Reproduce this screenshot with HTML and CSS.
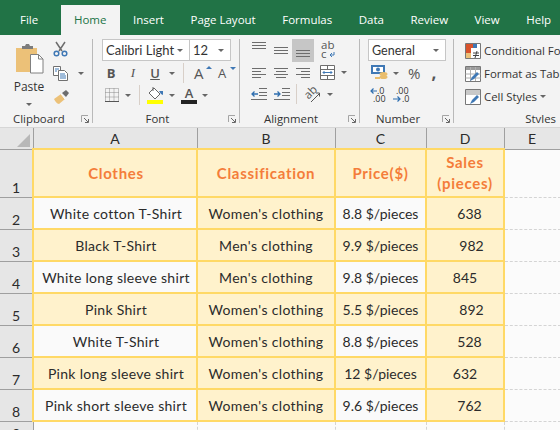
FILE: index.html
```html
<!DOCTYPE html>
<html lang="en">
<head>
  <meta charset="UTF-8" />
  <title>Clothes - Excel</title>
  <link rel="stylesheet" href="styles.css">
</head>
<body>

  <!-- tabs -->
  <div class="tabs">
    <div class="tab tab-file">File</div>
    <div class="tab active">Home</div>
    <div class="tab">Insert</div>
    <div class="tab">Page Layout</div>
    <div class="tab">Formulas</div>
    <div class="tab">Data</div>
    <div class="tab">Review</div>
    <div class="tab">View</div>
    <div class="tab">Help</div>
  </div>

  <!-- ribbon -->
  <div class="ribbon">

    <div class="group group-clipboard">
      <div class="group-body clip-body">
        <div class="paste">
          <svg class="fix" width="29" height="31" viewBox="0 0 29 31">
            <path d="M1 5h21v24H1z" fill="#ecc178"/>
            <path d="M7 6V3h3l1-2h3l1 2h3v3z" fill="#7c7c7c"/>
            <path d="M15.500 11.500h8l4.500 4.500v14h-12.500z" fill="#fff" stroke="#808080"/>
            <path d="M23.500 11.500v4.500h4.500" fill="none" stroke="#808080"/>
          </svg>
          <span class="paste-label">Paste</span>
          <span class="caret"></span>
        </div>
        <div class="clip-tools">
          <div class="tool-row">
            <svg class="fix" width="15" height="16" viewBox="0 0 15 16">
              <path d="M3 1l6 9M12 1l-6 9" stroke="#6d6d6d" stroke-width="1.500" fill="none"/>
              <circle cx="3.500" cy="12.500" r="2.300" fill="none" stroke="#3f78b5" stroke-width="1.500"/>
              <circle cx="11.500" cy="12.500" r="2.300" fill="none" stroke="#3f78b5" stroke-width="1.500"/>
            </svg>
          </div>
          <div class="tool-row">
            <svg class="fix" width="16" height="15" viewBox="0 0 16 15">
              <path d="M.5.500h7v9h-7z" fill="#fff" stroke="#707070"/>
              <path d="M5.500 4.500h6l3 3v7h-9z" fill="#fff" stroke="#707070"/>
              <path d="M2 3h4M2 5h2M7 8h5M7 10h6M7 12h6" stroke="#3f78b5"/>
            </svg>
            <span class="caret"></span>
          </div>
          <div class="tool-row">
            <svg class="fix" width="16" height="15" viewBox="0 0 16 15">
              <path d="M1 9l7-5 4 5-6 5c-2 0-4-3-5-5z" fill="#ecc178"/>
              <path d="M9 3l4-3 3 3-3 4z" fill="#6d6d6d"/>
              <path d="M8 4l4 5" stroke="#fff"/>
            </svg>
          </div>
        </div>
      </div>
      <div class="group-label">Clipboard<svg class="launcher" width="8" height="8" viewBox="0 0 8 8"><path d="M.5 7V.5H7" fill="none" stroke="#a5a5a5"/><path d="M3 3l4 4M7.500 4v3.500H4" fill="none" stroke="#666"/></svg></div>
    </div>

    <div class="group group-font">
      <div class="group-body">
        <div class="combo-row">
          <div class="combo combo-name">Calibri Light<span class="caret"></span></div>
          <div class="combo combo-size">12<span class="caret"></span></div>
        </div>
        <div class="tool-line font-line">
          <span class="glyph glyph-b">B</span>
          <span class="glyph glyph-i">I</span>
          <span class="glyph glyph-u">U</span>
          <span class="caret"></span>
          <span class="sep"></span>
          <span class="grow-a">A<i class="tip tip-up"></i></span>
          <span class="grow-a shrink-a">A<i class="tip tip-down"></i></span>
        </div>
        <div class="tool-line font-line-2">
          <svg class="fix" width="14" height="14" viewBox="0 0 14 14">
            <path d="M.5.500h13v13H.5zM.5 4.500h13M.5 9h13M4.500.500v13M9 .500v13" fill="none" stroke="#8a8a8a" stroke-dasharray="1 1"/>
            <path d="M0 13.500h14" stroke="#555"/>
          </svg>
          <span class="caret"></span>
          <span class="sep"></span>
          <svg class="fix" width="16" height="17" viewBox="0 0 16 17">
            <path d="M7 1l6 6-5 5-6-6z" fill="#fff" stroke="#666"/>
            <path d="M6 0v4" stroke="#666"/>
            <path d="M12 4h4v4l-2-1z" fill="#3f78b5"/>
            <path d="M0 13h16v4H0z" fill="#ffff00"/>
          </svg>
          <span class="caret"></span>
          <span class="color-a">A</span>
          <span class="caret"></span>
        </div>
      </div>
      <div class="group-label">Font<svg class="launcher" width="8" height="8" viewBox="0 0 8 8"><path d="M.5 7V.5H7" fill="none" stroke="#a5a5a5"/><path d="M3 3l4 4M7.500 4v3.500H4" fill="none" stroke="#666"/></svg></div>
    </div>

    <div class="group group-align">
      <div class="group-body align-grid">
        <svg class="fix ico-top" width="14" height="9" viewBox="0 0 14 9"><path d="M0 .500h14M0 3.500h14M0 6.500h14" stroke="#6d6d6d"/></svg>
        <svg class="fix ico-mid" width="14" height="9" viewBox="0 0 14 9"><path d="M0 .500h14M0 3.500h14M0 6.500h14" stroke="#6d6d6d"/></svg>
        <div class="align-on"><svg class="fix" width="14" height="9" viewBox="0 0 14 9"><path d="M0 .500h14M0 3.500h14M0 6.500h14" stroke="#6d6d6d"/></svg></div>
        <svg class="fix ico-wrap" width="16" height="20" viewBox="0 0 16 20">
          <text x="0" y="9" class="svg-txt">ab</text>
          <text x="0" y="18" class="svg-txt">c</text>
          <path d="M13 12v3H9M11 13l-2 2 2 2" fill="none" stroke="#3f78b5"/>
        </svg>

        <svg class="fix" width="14" height="10" viewBox="0 0 14 10"><path d="M0 .500h14M0 3.500h9M0 6.500h14M0 9.500h9" stroke="#6d6d6d"/></svg>
        <svg class="fix" width="14" height="10" viewBox="0 0 14 10"><path d="M0 .500h14M2 3.500h10M0 6.500h14M2 9.500h10" stroke="#6d6d6d"/></svg>
        <svg class="fix" width="14" height="10" viewBox="0 0 14 10"><path d="M0 .500h14M5 3.500h9M0 6.500h14M5 9.500h9" stroke="#6d6d6d"/></svg>
        <div class="merge">
          <svg class="fix" width="15" height="15" viewBox="0 0 15 15">
            <path d="M.5.500h14v14H.5zM.5 4.500h14M.5 10.500h14M7.500.500v4M7.500 10.500v4" fill="#fff" stroke="#6d6d6d"/>
            <path d="M3 7.500h9M4.500 6l-1.500 1.500L4.500 9M10.500 6L12 7.500 10.500 9" fill="none" stroke="#3f78b5"/>
          </svg>
          <span class="caret"></span>
        </div>

        <svg class="fix ico-ind" width="16" height="12" viewBox="0 0 16 12">
          <path d="M8 .500h8M8 4.500h8M8 7.500h8M0 11.500h16" stroke="#6d6d6d"/>
          <path d="M1 6h6M3.500 3.500L1 6l2.500 2.500" fill="none" stroke="#2f6fb0" stroke-width="1.300"/>
        </svg>
        <svg class="fix" width="16" height="12" viewBox="0 0 16 12">
          <path d="M8 .500h8M8 4.500h8M8 7.500h8M0 11.500h16" stroke="#6d6d6d"/>
          <path d="M0 6h6M3.500 3.500L6 6 3.500 8.500" fill="none" stroke="#2f6fb0" stroke-width="1.300"/>
        </svg>
        <div class="orient">
          <span class="sep"></span>
          <svg class="fix" width="17" height="17" viewBox="0 0 17 17">
            <text x="1" y="11" class="svg-txt" transform="rotate(-45 6 8)">ab</text>
            <path d="M7 16l8-8M12 7h3.500v3.500" fill="none" stroke="#555"/>
          </svg>
          <span class="caret"></span>
        </div>
      </div>
      <div class="group-label">Alignment<svg class="launcher" width="8" height="8" viewBox="0 0 8 8"><path d="M.5 7V.5H7" fill="none" stroke="#a5a5a5"/><path d="M3 3l4 4M7.500 4v3.500H4" fill="none" stroke="#666"/></svg></div>
    </div>

    <div class="group group-number">
      <div class="group-body">
        <div class="combo combo-general">General<span class="caret"></span></div>
        <div class="tool-line number-line">
          <svg class="fix" width="17" height="16" viewBox="0 0 17 16">
            <path d="M0 0h14v9H0z" fill="#3f78b5"/>
            <path d="M2 2h10v5H2z" fill="#fff"/>
            <circle cx="7" cy="4.500" r="2" fill="#3f78b5"/>
            <ellipse cx="12.500" cy="9" rx="4" ry="2" fill="#e9bd6d"/>
            <ellipse cx="12.500" cy="12" rx="4" ry="2" fill="#e9bd6d"/>
            <path d="M4 13h5" stroke="#e9bd6d" stroke-width="2"/>
          </svg>
          <span class="caret"></span>
          <span class="percent">%</span>
          <span class="comma">,</span>
        </div>
        <div class="tool-line number-line-2">
          <svg class="fix" width="16" height="16" viewBox="0 0 16 16">
            <text x="6" y="7" class="svg-dec">.0</text>
            <text x="2" y="15" class="svg-dec">.00</text>
            <path d="M0 4h6M2.500 1.500L0 4l2.500 2.500" fill="none" stroke="#2f6fb0" stroke-width="1.200"/>
          </svg>
          <svg class="fix" width="16" height="16" viewBox="0 0 16 16">
            <text x="3" y="7" class="svg-dec">.00</text>
            <text x="9" y="15" class="svg-dec">.0</text>
            <path d="M0 12h7M4.500 9.500L7 12l-2.500 2.500" fill="none" stroke="#2f6fb0" stroke-width="1.200"/>
          </svg>
        </div>
      </div>
      <div class="group-label">Number<svg class="launcher" width="8" height="8" viewBox="0 0 8 8"><path d="M.5 7V.5H7" fill="none" stroke="#a5a5a5"/><path d="M3 3l4 4M7.500 4v3.500H4" fill="none" stroke="#666"/></svg></div>
    </div>

    <div class="group group-styles">
      <div class="group-body styles-body">
        <div class="style-row">
          <svg class="fix" width="16" height="16" viewBox="0 0 16 16">
            <path d="M.5.500h15v15H.5z" fill="#fff" stroke="#777"/>
            <path d="M1 1h7v4H1z" fill="#d9532c"/>
            <path d="M8 1h4v4H8z" fill="#3f78b5"/>
            <path d="M1 5h5v5H1z" fill="#d9532c"/>
            <path d="M1 10h5v5H1z" fill="#ecc178"/>
            <path d="M8 10h6M8 12.500h6M12 8l-2 7" stroke="#444"/>
          </svg>
          <span>Conditional Formatting</span>
        </div>
        <div class="style-row">
          <svg class="fix" width="16" height="16" viewBox="0 0 16 16">
            <path d="M.5.500h15v15H.5z" fill="#fff" stroke="#777"/>
            <path d="M1 1h14v3H1z" fill="#9b9b9b"/>
            <path d="M.5 8h15M.5 12h15M5.500 1v14M10.500 1v14" stroke="#b0b0b0"/>
            <path d="M5 15l2-4 5-5 2 2-5 5z" fill="#3f78b5"/>
          </svg>
          <span>Format as Table</span>
        </div>
        <div class="style-row">
          <svg class="fix" width="16" height="16" viewBox="0 0 16 16">
            <path d="M.5.500h15v15H.5z" fill="#fff" stroke="#777"/>
            <path d="M1 1h14v5H1z" fill="#c9c9c9"/>
            <path d="M5 15l2-4 5-5 2 2-5 5z" fill="#3f78b5"/>
          </svg>
          <span>Cell Styles</span>
          <span class="caret"></span>
        </div>
      </div>
      <div class="group-label">Styles</div>
    </div>

  </div>

  <!-- sheet -->
  <div class="sheet-wrap">
  <table class="sheet">
    <colgroup>
      <col class="col-head"><col class="col-a"><col class="col-b"><col class="col-c"><col class="col-d"><col class="col-e">
    </colgroup>
    <thead>
      <tr class="letters">
        <th class="corner"><svg width="13" height="13" viewBox="0 0 13 13"><path d="M13 0v13H0z" fill="#b8b8b8"/></svg></th>
        <th>A</th><th>B</th><th>C</th><th>D</th><th>E</th>
      </tr>
    </thead>
    <tbody>
      <tr class="title-row">
        <th>1</th>
        <td class="title">Clothes</td><td class="title">Classification</td><td class="title">Price($)</td><td class="title sales">Sales<br>(pieces)</td><td class="blank"></td>
      </tr>
      <tr>
        <th>2</th>
        <td class="white">White cotton T-Shirt</td><td>Women's clothing</td><td class="white">8.8 $/pieces</td><td class="q-9">638</td><td class="blank"></td>
      </tr>
      <tr>
        <th>3</th>
        <td>Black T-Shirt</td><td>Men's clothing</td><td>9.9 $/pieces</td><td class="q-13">982</td><td class="blank"></td>
      </tr>
      <tr>
        <th>4</th>
        <td class="white">White long sleeve shirt</td><td>Men's clothing</td><td class="white">9.8 $/pieces</td><td>845</td><td class="blank"></td>
      </tr>
      <tr>
        <th>5</th>
        <td>Pink Shirt</td><td>Women's clothing</td><td>5.5 $/pieces</td><td class="q-13">892</td><td class="blank"></td>
      </tr>
      <tr>
        <th>6</th>
        <td class="white">White T-Shirt</td><td>Women's clothing</td><td class="white">8.8 $/pieces</td><td class="q-9">528</td><td class="blank"></td>
      </tr>
      <tr>
        <th>7</th>
        <td>Pink long sleeve shirt</td><td>Women's clothing</td><td>12 $/pieces</td><td>632</td><td class="blank"></td>
      </tr>
      <tr>
        <th>8</th>
        <td class="white">Pink short sleeve shirt</td><td>Women's clothing</td><td class="white">9.6 $/pieces</td><td class="q-9">762</td><td class="blank"></td>
      </tr>
      <tr class="empty-row">
        <th>9</th>
        <td class="blank"></td><td class="blank"></td><td class="blank"></td><td class="blank"></td><td class="blank"></td>
      </tr>
    </tbody>
  </table>
  </div>

</body>
</html>
```

FILE: styles.css
```css
html, body {
  height: 430px;
}

body {
  font-family: "Open Sans", sans-serif;
  margin: 0;
  padding: 0;
  background: #fff;
  color: #333;
  overflow: hidden;
}

.fix {
  flex: none;
  display: block;
  overflow: visible;
}

/* tabs */
.tabs {
  display: flex;
  align-items: flex-end;
  height: 35px;
  background: #217346;
  color: #fff;
  font-size: 11.5px;
  white-space: nowrap;
  overflow: hidden;
}

.tab {
  height: 30px;
  line-height: 30px;
  padding: 0 13.25px;
}

.tab-file {
  padding: 0 22.5px 0 20px;
}

.tab.active {
  background: #f3f3f3;
  color: #217346;
}

/* ribbon */
.ribbon {
  display: flex;
  height: 93px;
  box-sizing: border-box;
  background: #f3f3f3;
  border-bottom: 1px solid #d6d6d6;
  overflow: hidden;
  font-size: 11.4px;
}

.group {
  position: relative;
  flex: none;
  box-sizing: border-box;
  height: 84px;
  margin-top: 4px;
  border-right: 1px solid #b9b9b9;
}

.group-clipboard { width: 93px; }
.group-font { width: 147px; padding-left: 9px; }
.group-align { width: 120px; padding-left: 12px; }
.group-number { width: 94px; padding-left: 8px; }
.group-styles { width: 106px; padding-left: 11px; border-right: 0; overflow: hidden; }

.group-label {
  position: absolute;
  left: 0;
  right: 0;
  top: 72px;
  padding-right: 17px;
  text-align: center;
  line-height: 16px;
  white-space: nowrap;
}

.group-clipboard .group-label { text-align: left; padding-left: 13px; padding-right: 0; }
.group-styles .group-label { text-align: right; padding-right: 4px; }

.launcher {
  position: absolute;
  right: 3px;
  top: 4px;
}

.caret {
  display: inline-block;
  flex: none;
  width: 0;
  height: 0;
  border-left: 3px solid transparent;
  border-right: 3px solid transparent;
  border-top: 3px solid #666;
}

.sep {
  flex: none;
  width: 1px;
  height: 20px;
  background: #d8cfc8;
}

/* clipboard */
.clip-body {
  display: flex;
}

.paste {
  width: 53px;
  display: flex;
  flex-direction: column;
  align-items: center;
  padding: 4px 0 0 5px;
  box-sizing: border-box;
}

.paste-label {
  line-height: 18px;
  margin-top: 4px;
  font-size: 12px;
}

.paste .caret {
  margin-top: 7px;
}

.clip-tools {
  display: flex;
  flex-direction: column;
  padding-top: 2px;
  gap: 8px;
}

.tool-row {
  display: flex;
  align-items: center;
  gap: 9px;
  height: 16px;
}

/* font */
.combo-row {
  display: flex;
}

.combo {
  display: flex;
  align-items: center;
  justify-content: space-between;
  box-sizing: border-box;
  height: 22px;
  padding: 0 6px 0 3px;
  background: #fff;
  border: 1px solid #c6c6c6;
  font-family: "Lato", sans-serif;
  font-size: 13px;
}

.combo-name { width: 88px; }
.combo-size { width: 42px; margin-left: -1px; }

.combo-general {
  width: 78px;
  font-size: 12.5px;
}

.tool-line {
  display: flex;
  align-items: center;
  height: 22px;
}

.font-line {
  margin-top: 1px;
}

.glyph {
  width: 10px;
  text-align: center;
  color: #555;
  font-size: 13px;
  line-height: 22px;
}

.glyph-b {
  margin-left: 4px;
  font-weight: 700;
}

.glyph-i {
  margin-left: 12px;
  font-family: "Liberation Serif", serif;
  font-style: italic;
}

.glyph-u {
  margin-left: 12px;
  font-weight: 600;
  text-decoration: underline;
}

.font-line .caret { margin-left: 9px; }
.font-line .sep { margin-left: 8px; }

.grow-a {
  position: relative;
  margin-left: 10px;
  color: #555;
  font-size: 15px;
  width: 12px;
}

.shrink-a {
  margin-left: 12px;
  font-size: 13px;
}

.tip {
  position: absolute;
  right: -6px;
  top: 3px;
  width: 0;
  height: 0;
  border-left: 3px solid transparent;
  border-right: 3px solid transparent;
}

.tip-up { border-bottom: 3px solid #3f78b5; }
.tip-down { border-top: 3px solid #3f78b5; }

.font-line-2 {
  padding-left: 3px;
}

.font-line-2 .caret { margin-left: 6px; }
.font-line-2 .sep { margin-left: 8px; margin-right: 7px; }
.font-line-2 .color-a + .caret { margin-left: 5px; }

.color-a {
  margin-left: 6px;
  width: 16px;
  height: 17px;
  box-sizing: border-box;
  border-bottom: 4px solid #222;
  color: #555;
  text-align: center;
  font-weight: 600;
  font-size: 13px;
  line-height: 13px;
}

/* alignment */
.align-grid {
  display: grid;
  grid-template-columns: 22px 22px 22px 30px;
  grid-template-rows: 24px 21px 22px;
  align-items: center;
  justify-items: start;
  margin-top: -1px;
}

.ico-top {
  margin-bottom: 8px;
}

.ico-mid {
  margin-top: 2px;
}

.align-on {
  display: flex;
  align-items: flex-end;
  justify-content: center;
  width: 22px;
  height: 23px;
  margin-left: -4px;
  padding-bottom: 3px;
  box-sizing: border-box;
  background: #c6c6c6;
}

.ico-wrap {
  margin-left: 3px;
}

.ico-ind {
  margin-left: -1px;
}

.merge {
  display: flex;
  align-items: center;
  gap: 6px;
  margin-left: 2px;
}

.orient {
  grid-column: span 2;
  display: flex;
  align-items: center;
  gap: 6px;
}

.orient .sep {
  margin-right: 1px;
}

.svg-txt {
  font-family: "Open Sans", sans-serif;
  font-size: 11.5px;
  fill: #555;
}

.svg-dec {
  font-family: "Open Sans", sans-serif;
  font-size: 9px;
  fill: #333;
}

/* number */
.number-line {
  margin-top: 1px;
  padding-left: 3px;
}

.number-line .caret { margin-left: 5px; }

.percent {
  margin-left: 9px;
  font-size: 15px;
  color: #555;
}

.comma {
  margin-left: 11px;
  font-size: 17px;
  font-weight: 700;
  color: #555;
  line-height: 14px;
}

.number-line-2 {
  padding-left: 3px;
  gap: 6px;
}

/* styles */
.styles-body {
  display: flex;
  flex-direction: column;
  gap: 6px;
  padding-top: 3px;
}

.style-row {
  display: flex;
  align-items: center;
  gap: 3px;
  height: 17px;
  white-space: nowrap;
}

/* sheet */
.sheet-wrap {
  height: 302px;
  overflow: hidden;
}

.sheet {
  table-layout: fixed;
  border-collapse: collapse;
  width: 560px;
  font-family: "Lato", sans-serif;
  font-size: 14px;
  color: #2b2b2b;
}

.col-head { width: 33px; }
.col-a { width: 164px; }
.col-b { width: 138px; }
.col-c { width: 91px; }
.col-d { width: 78px; }
.col-e { width: 56px; }

.sheet th {
  background: #e6e6e6;
  font-weight: 400;
  font-size: 14px;
  padding: 0;
  text-align: center;
  border-right: 1px solid #9f9f9f;
  border-bottom: 1px solid #9f9f9f;
}

.letters {
  height: 21px;
}

.corner svg {
  display: block;
  margin: 4px 3px 0 auto;
}

tbody th {
  vertical-align: bottom;
  line-height: 18px;
}

tbody tr {
  height: 32px;
}

tbody .title-row {
  height: 48px;
}

tbody .empty-row {
  height: 22px;
}

.sheet td {
  padding: 0;
  text-align: center;
  background: #fff2cc;
  border: 2px solid #ffd966;
  white-space: nowrap;
}

.sheet td:nth-child(2) {
  padding-left: 2px;
  letter-spacing: .3px;
}

.sheet td:nth-child(3) {
  letter-spacing: .33px;
}

.sheet td.white {
  background: #fafafa;
}

.sheet td.title {
  color: #f47d3a;
  font-weight: 700;
  font-size: 15px;
  letter-spacing: .7px;
}

.sheet td.sales {
  line-height: 21px;
}

.sheet td.q-9 { padding-left: 9px; }
.sheet td.q-13 { padding-left: 13px; }

.sheet td.blank {
  background: #fbfbfb;
  border: 1px dashed #d4d4d4;
}
```
